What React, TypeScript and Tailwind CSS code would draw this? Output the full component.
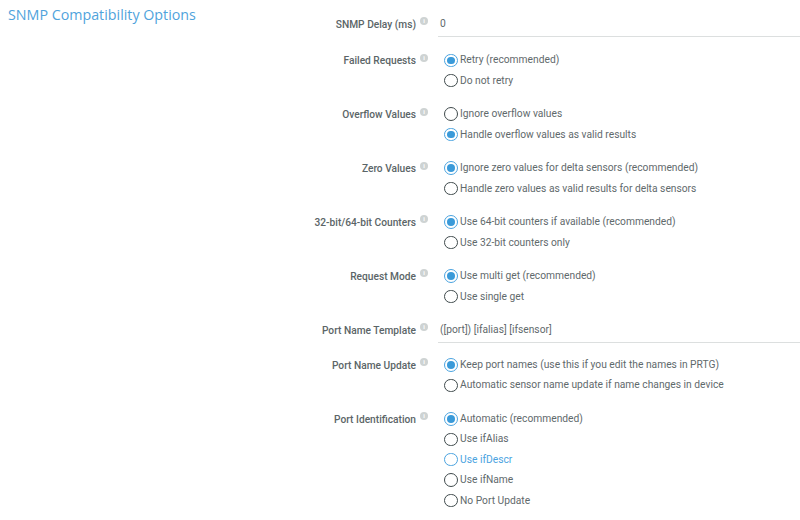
import React from 'react';

const sections: { label: string; options: string[]; selected: number; hover?: number }[] = [
  { label: 'Failed Requests', options: ['Retry (recommended)', 'Do not retry'], selected: 0 },
  { label: 'Overflow Values', options: ['Ignore overflow values', 'Handle overflow values as valid results'], selected: 1 },
  { label: 'Zero Values', options: ['Ignore zero values for delta sensors (recommended)', 'Handle zero values as valid results for delta sensors'], selected: 0 },
  { label: '32-bit/64-bit Counters', options: ['Use 64-bit counters if available (recommended)', 'Use 32-bit counters only'], selected: 0 },
  { label: 'Request Mode', options: ['Use multi get (recommended)', 'Use single get'], selected: 0 },
];

const portUpdate = { label: 'Port Name Update', options: ['Keep port names (use this if you edit the names in PRTG)', 'Automatic sensor name update if name changes in device'], selected: 0 };
const portIdent = { label: 'Port Identification', options: ['Automatic (recommended)', 'Use ifAlias', 'Use ifDescr', 'Use ifName', 'No Port Update'], selected: 0, hover: 2 };

const InfoIcon: React.FC = () => (
  <span className="ml-[4px] mt-[-6px] flex h-[8px] w-[8px] shrink-0 items-center justify-center rounded-full bg-[#ced3d3] text-[6px] leading-none font-bold text-white">
    i
  </span>
);

const Label: React.FC<{ text: string }> = ({ text }) => (
  <div className="flex h-[20.4px] w-[428px] items-center justify-end">
    <span className="text-[10.2px] font-medium text-[#5b6567]">{text}</span>
    <InfoIcon />
  </div>
);

const Radio: React.FC<{ text: string; checked: boolean; hover: boolean }> = ({ text, checked, hover }) => (
  <div className="flex h-[20.4px] items-center">
    <span
      className={`mt-[-0.6px] flex h-[13.5px] w-[13.5px] shrink-0 items-center justify-center rounded-full border-[1.5px] ${
        checked || hover ? 'border-[#4aa3df]' : 'border-[#3f4a4c]'
      }`}
    >
      {checked && <span className="h-[7.5px] w-[7.5px] rounded-full bg-[#3a9ad9]" />}
    </span>
    <span className={`ml-[2.5px] mt-[-1px] text-[10.25px] ${hover ? 'text-[#4aa3df]' : 'text-[#5f6a6c]'}`}>{text}</span>
  </div>
);

const RadioRow: React.FC<{ label: string; options: string[]; selected: number; hover?: number }> = ({ label, options, selected, hover }) => (
  <div className="mb-[13.2px] flex">
    <Label text={label} />
    <div className="ml-[16px] flex flex-col">
      {options.map((o, i) => (
        <Radio key={o} text={o} checked={i === selected} hover={i === hover} />
      ))}
    </div>
  </div>
);

const InputRow: React.FC<{ label: string; value: string }> = ({ label, value }) => (
  <div className="mb-[13.2px] flex h-[23.2px]">
    <Label text={label} />
    <div className="ml-[10px] flex-1 border-b border-[#dcdfdf] pl-[2px] text-[10.25px] leading-[20.4px] text-[#5f6a6c]">
      {value}
    </div>
  </div>
);

export default function App() {
  return (
    <div className="relative h-[520px] w-[800px] overflow-hidden bg-white font-['Roboto',sans-serif]">
      <h2 className="absolute left-[8px] top-[5px] font-['Open_Sans',sans-serif] text-[14.27px] leading-[20px] font-normal text-[#4fa3dc]">
        SNMP Compatibility Options
      </h2>
      <div className="flex flex-col pt-[14px]">
        <InputRow label="SNMP Delay (ms)" value="0" />
        {sections.map((s) => (
          <RadioRow key={s.label} {...s} />
        ))}
        <div className="mb-[-1.6px]">
          <InputRow label="Port Name Template" value="([port]) [ifalias] [ifsensor]" />
        </div>
        <RadioRow {...portUpdate} />
        <RadioRow {...portIdent} />
      </div>
    </div>
  );
}
